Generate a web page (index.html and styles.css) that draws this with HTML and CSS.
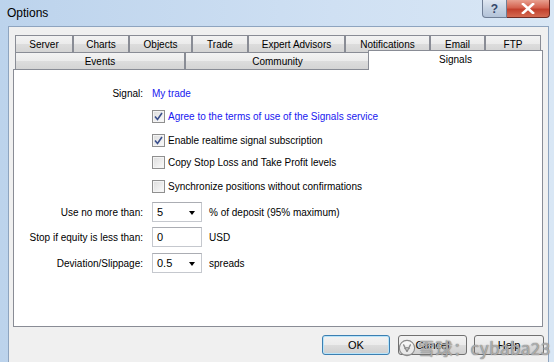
FILE: index.html
```html
<!DOCTYPE html>
<html lang="en">

<head>
    <meta charset="UTF-8">
    <meta name="viewport" content="width=device-width, initial-scale=1.0">
    <title>Options</title>
    <link rel="stylesheet" href="styles.css">
</head>

<body>
    <div class="window">
        <div class="titlebar">
            <span class="title">Options</span>
            <div class="caption">
                <div class="cap cap-help">?</div>
                <div class="cap cap-close">
                    <svg width="14" height="11" viewBox="0 0 14 11">
                        <path d="M2 1 L12 10 M12 1 L2 10" stroke="#fff" stroke-width="2.6" stroke-linecap="square" />
                    </svg>
                </div>
            </div>
        </div>

        <div class="client">
            <div class="tabs">
                <div class="tabrow">
                    <div class="tab w58">Server</div>
                    <div class="tab w56">Charts</div>
                    <div class="tab w63">Objects</div>
                    <div class="tab w56">Trade</div>
                    <div class="tab w97">Expert Advisors</div>
                    <div class="tab w85">Notifications</div>
                    <div class="tab w55">Email</div>
                    <div class="tab w56">FTP</div>
                </div>
                <div class="tabrow">
                    <div class="tab w170">Events</div>
                    <div class="tab w185">Community</div>
                    <div class="tab w171 active">Signals</div>
                </div>
            </div>

            <div class="panel">
                <div class="form">
                    <div class="label">Signal:</div>
                    <div class="value link">My trade</div>

                    <div class="check-row">
                        <span class="box checked"><svg width="9" height="9" viewBox="0 0 9 9"><path d="M1 4.5 L3.5 7.5 L8 1" fill="none" stroke="#3a4f8c" stroke-width="1.6" /></svg></span>
                        <span class="link">Agree to the terms of use of the Signals service</span>
                    </div>
                    <div class="check-row">
                        <span class="box checked"><svg width="9" height="9" viewBox="0 0 9 9"><path d="M1 4.5 L3.5 7.5 L8 1" fill="none" stroke="#3a4f8c" stroke-width="1.6" /></svg></span>
                        <span>Enable realtime signal subscription</span>
                    </div>
                    <div class="check-row">
                        <span class="box"></span>
                        <span>Copy Stop Loss and Take Profit levels</span>
                    </div>
                    <div class="check-row">
                        <span class="box"></span>
                        <span>Synchronize positions without confirmations</span>
                    </div>

                    <div class="label">Use no more than:</div>
                    <div class="value">
                        <div class="field">5<span class="arrow"></span></div>
                        <span>% of deposit (95% maximum)</span>
                    </div>

                    <div class="label">Stop if equity is less than:</div>
                    <div class="value">
                        <div class="field">0</div>
                        <span>USD</span>
                    </div>

                    <div class="label">Deviation/Slippage:</div>
                    <div class="value">
                        <div class="field">0.5<span class="arrow"></span></div>
                        <span>spreads</span>
                    </div>
                </div>
            </div>

            <div class="buttons">
                <div class="btn btn-ok">OK</div>
                <div class="btn btn-cancel">Cancel</div>
                <div class="btn btn-help">Help</div>
            </div>
        </div>

        <div class="watermark">
            <svg width="18" height="18" viewBox="0 0 20 20">
                <circle cx="10" cy="10" r="8.5" fill="rgba(255,255,255,0.5)" stroke="#8a8a8a" stroke-width="1.2" />
                <path d="M6 6 L10 14 M14 6 L10 14 M7 11 Q10 8 13 11" fill="none" stroke="#8a8a8a" stroke-width="1.4" />
            </svg>
            <span>雪球：cybaba23</span>
        </div>
    </div>
</body>

</html>
```

FILE: styles.css
```css
* {
    margin: 0;
    padding: 0;
    box-sizing: border-box;
}

body {
    width: 554px;
    height: 362px;
    overflow: hidden;
    font-family: "Liberation Sans", Arial, sans-serif;
    font-size: 10px;
    color: #000;
}

.window {
    position: relative;
    height: 362px;
    display: flex;
    flex-direction: column;
    background: linear-gradient(to right, #bcd3ec, #cfe0f3 60%, #d9e7f5);
}

.titlebar {
    height: 26px;
    display: flex;
    justify-content: space-between;
    align-items: flex-start;
}

.title {
    font-size: 12px;
    padding: 6px 0 0 7px;
}

.caption {
    display: flex;
    margin-right: 4px;
}

.cap {
    height: 18px;
    display: flex;
    justify-content: center;
    align-items: center;
    border: 1px solid #6f7e95;
    border-top: 0;
}

.cap-help {
    width: 25px;
    border-radius: 0 0 0 4px;
    background: linear-gradient(#e0e8f2, #c6d3e3 50%, #b3c3d8);
    color: #35486a;
    font-size: 12px;
    font-weight: bold;
}

.cap-close {
    width: 43px;
    border-left: 0;
    border-color: #6e2b24;
    border-radius: 0 0 4px 0;
    background: linear-gradient(#e8a090, #d4624f 45%, #c2402d 55%, #d46a52);
}

.client {
    flex: 1;
    margin: 0 5px 0 8px;
    background-color: #f0f0f0;
    border: 1px solid #8ea4bf;
    border-bottom: 0;
    display: flex;
    flex-direction: column;
}

.tabs {
    padding: 8px 0 0 6px;
}

.tabrow {
    display: flex;
    height: 17px;
}

.tab {
    height: 17px;
    display: flex;
    justify-content: center;
    align-items: center;
    border: 1px solid #898c95;
    border-bottom: 0;
    background: linear-gradient(#f3f3f3, #ebebeb 50%, #dddddd 50%, #d4d4d4);
}

.tab.active {
    position: relative;
    z-index: 1;
    height: 20px;
    margin: -2px -2px 0 -2px;
    width: 175px;
    align-items: flex-start;
    padding-top: 3px;
    background: #fff;
}

.w55 { width: 55px; }
.w56 { width: 56px; }
.w58 { width: 58px; }
.w63 { width: 63px; }
.w85 { width: 85px; }
.w97 { width: 97px; }
.w170 { width: 170px; }
.w171 { width: 171px; }
.w185 { width: 185px; }

.panel {
    margin-left: 4px;
    width: 530px;
    height: 258px;
    background: #fff;
    border: 1px solid #898c95;
}

.form {
    display: grid;
    grid-template-columns: 129px auto;
    grid-template-rows: 22px 24px 24px 20px 28px 24px 26px 26px;
    column-gap: 9px;
    align-items: center;
    padding-top: 12px;
}

.label {
    text-align: right;
}

.value {
    display: flex;
    align-items: center;
    gap: 7px;
}

.link {
    color: #1818f0;
}

.check-row {
    grid-column: 2;
    display: flex;
    align-items: center;
    gap: 3px;
}

.box {
    width: 13px;
    height: 13px;
    border: 1px solid #8f8f8f;
    background: linear-gradient(135deg, #dcdcdc, #fbfbfb);
    box-shadow: inset 0 0 0 1px #f4f4f4;
    display: flex;
    justify-content: center;
    align-items: center;
}

.field {
    position: relative;
    width: 50px;
    height: 20px;
    padding-left: 4px;
    display: flex;
    align-items: center;
    border: 1px solid #c5c8ce;
    border-top-color: #abadb3;
    background: #fff;
    font-size: 11px;
}

.arrow {
    position: absolute;
    right: 6px;
    top: 8px;
    border-left: 3.5px solid transparent;
    border-right: 3.5px solid transparent;
    border-top: 4px solid #000;
}

.buttons {
    display: flex;
    justify-content: flex-end;
    padding: 8px 4px 0 0;
}

.btn {
    height: 20px;
    margin-left: 7px;
    display: flex;
    justify-content: center;
    align-items: center;
    border: 1px solid #707070;
    border-radius: 3px;
    background: linear-gradient(#f2f2f2, #ebebeb 50%, #dddddd 50%, #cfcfcf);
    font-size: 11px;
}

.btn-ok {
    width: 68px;
    border-color: #3c7fb1;
    box-shadow: inset 0 0 0 1px #b8e4fa;
}

.btn-cancel {
    width: 69px;
    margin-left: 8px;
}

.btn-help {
    width: 70px;
}

.watermark {
    position: absolute;
    left: 398px;
    top: 335px;
    display: flex;
    align-items: center;
    gap: 2px;
    font-family: "Noto Sans CJK SC", sans-serif;
    font-size: 17px;
    color: rgba(255, 255, 255, 0.4);
    text-shadow: 0 0 1px #777, 0 0 1px #777;
    letter-spacing: 0.5px;
}
```
